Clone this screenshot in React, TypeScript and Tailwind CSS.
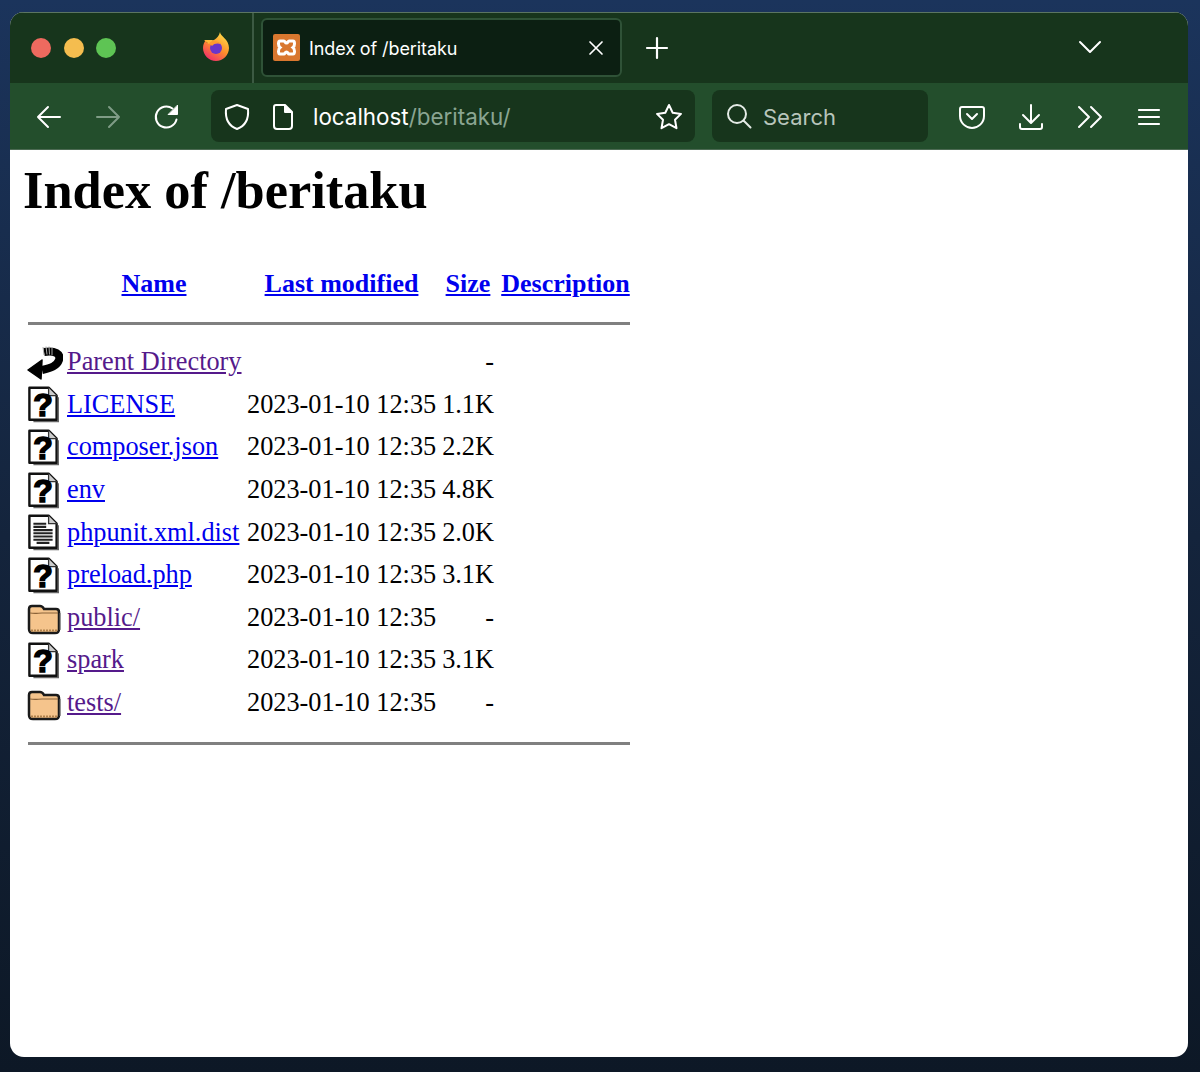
import React from "react";

const files = [
  { icon: "back", name: "Parent Directory", date: "", size: "-", visited: true },
  { icon: "unknown", name: "LICENSE", date: "2023-01-10 12:35", size: "1.1K" },
  { icon: "unknown", name: "composer.json", date: "2023-01-10 12:35", size: "2.2K" },
  { icon: "unknown", name: "env", date: "2023-01-10 12:35", size: "4.8K" },
  { icon: "text", name: "phpunit.xml.dist", date: "2023-01-10 12:35", size: "2.0K" },
  { icon: "unknown", name: "preload.php", date: "2023-01-10 12:35", size: "3.1K" },
  { icon: "folder", name: "public/", date: "2023-01-10 12:35", size: "-", visited: true },
  { icon: "unknown", name: "spark", date: "2023-01-10 12:35", size: "3.1K", visited: true },
  { icon: "folder", name: "tests/", date: "2023-01-10 12:35", size: "-", visited: true },
];

const Page = () => (
  <>
    <path d="M20 7v15H4" fill="none" stroke="#666" strokeWidth="1.200" />
    <path d="M1.500 1h12l5 5v15h-17z" fill="#fff" stroke="#111" strokeWidth="1.500" strokeLinejoin="round" />
    <path d="M13.500 1v5h5" fill="#ccc" stroke="#333" strokeWidth="0.800" />
  </>
);

const FileIcon = ({ type }: { type: string }) => {
  if (type === "back") {
    return (
      <svg width="36" height="36" viewBox="0 0 36 36" className="ml-[-1px] mt-[1px]">
        <path d="M17 7C28 5 34 9 32 15 30 21 24 23 15 25" fill="none" stroke="#000" strokeWidth="8" />
        <path d="M1 25L15 15 14 34z" fill="#000" stroke="#000" strokeWidth="1.500" strokeLinejoin="round" />
        <path d="M16 2l1 8M19 1.500l1 8M22 1.500l.5 8M25 2l0 8" stroke="#aaa" strokeWidth="1" />
      </svg>
    );
  }
  if (type === "folder") {
    return (
      <svg width="34" height="32" viewBox="0 0 34 32" className="mt-[4px] ml-[-1px]">
        <path d="M2 6c0-2 1-3 3-3h8c2 0 3 1 4 3h12c2 0 3 1 3 3v17c0 3-1 4-4 4H6c-3 0-4-1-4-4z" fill="#f5c48c" stroke="#1a1a1a" strokeWidth="2.500" />
        <path d="M3 10c6 1 8 0 12 0h16" fill="none" stroke="#8a6238" strokeWidth="1.200" />
        <path d="M4 27.500h26" stroke="#b0814c" strokeWidth="2" strokeDasharray="2 1" />
        <path d="M33 10v17" stroke="#666" strokeWidth="1" />
      </svg>
    );
  }
  if (type === "text") {
    return (
      <svg width="32" height="37" viewBox="0 0 20 23" className="ml-[-1px]">
        <Page />
        <path d="M4 6h8M4 8h8M4 10h12M4 12h12M4 14h12M4 16h12M6 18h8" stroke="#222" strokeWidth="1.300" />
      </svg>
    );
  }
  return (
    <svg width="32" height="37" viewBox="0 0 20 23" className="ml-[-1px]">
      <Page />
      <text x="10" y="18.600" textAnchor="middle" fontFamily="Liberation Sans" fontWeight="700" fontSize="20" stroke="#000" strokeWidth="1">
        ?
      </text>
    </svg>
  );
};

const Firefox = () => (
  <svg width="28" height="30" viewBox="0 0 28 30">
    <defs>
      <linearGradient id="fx" x1="0.8" y1="0" x2="0.2" y2="1">
        <stop offset="0" stopColor="#ffe14a" />
        <stop offset="0.5" stopColor="#ff8f2b" />
        <stop offset="1" stopColor="#f0266f" />
      </linearGradient>
    </defs>
    <path d="M18 0c0 4 9 7 9 16 0 7-6 13-13 13S1 23 1 16c0-3 1-6 3-8l1 3c2-2 5-3 7-3 3-2 5-4 6-8z" fill="url(#fx)" />
    <path d="M2 8h9l-4 4z" fill="#ffb73a" />
    <circle cx="14" cy="16" r="6" fill="#6b35c9" />
    <path d="M7 11c3-2 9-3 12 1-3-1-7-1-9 2z" fill="#ff9a2e" />
  </svg>
);

const Xampp = () => (
  <svg width="27" height="27" viewBox="0 0 27 27">
    <rect width="27" height="27" rx="2" fill="#d9772f" />
    <path d="M7 7h4c1 0 1 2 2.500 2S15 7 16 7h4c2 0 2 5 0 6.500 2 1.500 2 6.500 0 6.500h-4c-1 0-1-2-2.500-2S12 20 11 20H7c-2 0-2-5 0-6.500C5 12 5 7 7 7z" fill="none" stroke="#fff" strokeWidth="3" />
  </svg>
);

const Icon = ({ children, size = 30 }: { children: React.ReactNode; size?: number }) => (
  <svg width={size} height={size} viewBox="0 0 30 30" fill="none" stroke="currentColor" strokeWidth="2" strokeLinecap="round" strokeLinejoin="round">
    {children}
  </svg>
);

const NavSlot = ({ children, dim }: { children: React.ReactNode; dim?: boolean }) => (
  <div className={`w-[59px] pt-[2px] flex justify-center items-center ${dim ? "text-[#7f9c86]" : "text-white"}`}>{children}</div>
);

export default function App() {
  return (
    <div className="h-[1072px] w-[1200px] overflow-hidden pt-[12px] pl-[10px] bg-gradient-to-b from-[#1b345c] via-[#14243c] to-[#0d1826]">
      <div className="w-[1178px] h-[1045px] rounded-[14px] overflow-hidden bg-white flex flex-col font-['Inter',sans-serif]">
        <div className="h-[71px] flex items-center bg-[#17351c] border-t border-[#5b7562] shrink-0">
          <div className="w-[244px] h-full border-r-2 border-[#3c5a43] flex items-center pl-[21px] shrink-0">
            <div className="w-[20px] h-[20px] rounded-full bg-[#ee6a5f]" />
            <div className="w-[20px] h-[20px] rounded-full bg-[#f5bd4f] ml-[12.500px]" />
            <div className="w-[20px] h-[20px] rounded-full bg-[#5ec454] ml-[12.500px]" />
            <div className="ml-[86px] mt-[-2px]">
              <Firefox />
            </div>
          </div>
          <div className="ml-[7px] w-[361px] h-[59px] mt-[-1px] rounded-[6px] bg-[#0c1f12] border-2 border-[#2f5237] flex items-center pl-[10px] pr-[16px] text-white">
            <Xampp />
            <span className="ml-[9px] mt-[3px] text-[18px] leading-none tracking-[-0.1px]">Index of /beritaku</span>
            <svg className="ml-auto" width="16" height="16" viewBox="0 0 16 16" stroke="currentColor" strokeWidth="1.700" strokeLinecap="round">
              <path d="M2 2l12 12M14 2L2 14" />
            </svg>
          </div>
          <div className="ml-[23px] text-white">
            <svg width="24" height="24" viewBox="0 0 24 24" stroke="currentColor" strokeWidth="2.200" strokeLinecap="round">
              <path d="M12 2v20M2 12h20" />
            </svg>
          </div>
          <div className="ml-[409px] mt-[-2px] text-white">
            <svg width="24" height="14" viewBox="0 0 24 14" fill="none" stroke="currentColor" strokeWidth="2" strokeLinecap="round" strokeLinejoin="round">
              <path d="M2 2l10 10L22 2" />
            </svg>
          </div>
        </div>

        <div className="h-[67px] flex items-center bg-[#234e2c] pl-[9.500px] border-b border-[#4c6a53] shrink-0">
          <NavSlot>
            <Icon>
              <path d="M26 15H4M14 5L4 15l10 10" />
            </Icon>
          </NavSlot>
          <NavSlot dim>
            <Icon>
              <path d="M4 15h22M16 5l10 10-10 10" />
            </Icon>
          </NavSlot>
          <NavSlot>
            <Icon>
              <path d="M24.500 17.500A10.500 10.500 0 1 1 20.500 6.500" />
              <path d="M25.500 3.500v9h-9z" fill="currentColor" strokeWidth="1" />
            </Icon>
          </NavSlot>
          <div className="ml-[14.500px] w-[484px] h-[52px] rounded-[8px] bg-[#17351c] flex items-center text-white shrink-0">
            <div className="ml-[12px] mt-[1px]">
              <svg width="28" height="30" viewBox="0 0 28 30" fill="none" stroke="currentColor" strokeWidth="2" strokeLinejoin="round">
                <path d="M14 3l11 4c1 11-3 17-11 20C6 24 2 18 3 7z" />
              </svg>
            </div>
            <div className="ml-[22px] mt-[1px]">
              <svg width="20" height="26" viewBox="0 0 20 26" fill="none" stroke="currentColor" strokeWidth="2" strokeLinejoin="round">
                <path d="M3 1h9l7 7v14a3 3 0 0 1-3 3H4a3 3 0 0 1-3-3V3a2 2 0 0 1 2-2z" />
                <path d="M12 1v7h7" fill="currentColor" />
              </svg>
            </div>
            <span className="ml-[20px] mt-[2px] text-[22.400px] leading-none">
              localhost<span className="text-[#8aa592]">/beritaku/</span>
            </span>
            <div className="ml-auto mr-[11px] mt-[1px]">
              <Icon>
                <path d="M15 3l3.700 7.800 8.300 1.100-6 5.900 1.500 8.400L15 22.200l-7.500 4 1.500-8.400-6-5.900 8.300-1.100z" />
              </Icon>
            </div>
          </div>
          <div className="ml-[17px] w-[216px] h-[52px] rounded-[8px] bg-[#17351c] flex items-center shrink-0">
            <div className="ml-[13px] text-[#e4ebe6] mt-[1px]">
              <svg width="28" height="28" viewBox="0 0 28 28" fill="none" stroke="currentColor" strokeWidth="2" strokeLinecap="round">
                <circle cx="12" cy="11" r="9" />
                <path d="M18.500 17.500l7 7" />
              </svg>
            </div>
            <span className="ml-[10px] mt-[1px] text-[22px] leading-none text-[#b7c5bb]">Search</span>
          </div>
          <div className="ml-[14.500px] flex">
            <NavSlot>
              <svg width="26" height="24" viewBox="0 0 26 24" fill="none" stroke="currentColor" strokeWidth="2" strokeLinecap="round" strokeLinejoin="round">
                <path d="M3 2h20a2 2 0 0 1 2 2v7c0 7-6 12-12 12S1 18 1 11V4a2 2 0 0 1 2-2z" />
                <path d="M8 9l5 5 5-5" />
              </svg>
            </NavSlot>
            <NavSlot>
              <svg width="26" height="28" viewBox="0 0 26 28" fill="none" stroke="currentColor" strokeWidth="2" strokeLinecap="round" strokeLinejoin="round">
                <path d="M13 2v17M5 12l8 8 8-8M2 21v3a2 2 0 0 0 2 2h18a2 2 0 0 0 2-2v-3" />
              </svg>
            </NavSlot>
            <NavSlot>
              <svg width="26" height="24" viewBox="0 0 26 24" fill="none" stroke="currentColor" strokeWidth="2" strokeLinecap="round" strokeLinejoin="round">
                <path d="M2 2l10 10L2 22M14 2l10 10-10 10" />
              </svg>
            </NavSlot>
            <NavSlot>
              <svg width="24" height="20" viewBox="0 0 24 20" stroke="currentColor" strokeWidth="2.200" strokeLinecap="round">
                <path d="M2 3h20M2 10h20M2 17h20" />
              </svg>
            </NavSlot>
          </div>
        </div>

        <div className="flex-1 font-['Liberation_Serif',serif] text-black text-[26.300px] pl-[13px]">
          <h1 className="text-[52.400px] font-bold leading-[60px] mt-[10px]">Index of /beritaku</h1>
          <div className="ml-[5px] w-[602px] mt-[42px]">
            <div className="flex h-[42px] items-center font-bold leading-none text-[26px] pt-[1px]">
              <div className="w-[39px]" />
              <a className="w-[174px] text-center text-[#0000ee] underline">Name</a>
              <a className="ml-[6px] w-[189px] text-center text-[#0000ee] underline">Last modified</a>
              <a className="ml-[6px] w-[52px] text-center text-[#0000ee] underline">Size</a>
              <a className="ml-[7px] w-[129px] text-center text-[#0000ee] underline whitespace-nowrap">Description</a>
            </div>
            <div className="h-[3px] bg-[#808080] mt-[18px] mb-[16px]" />
            {files.map((f) => (
              <div key={f.name} className="flex h-[42.600px] items-center leading-none whitespace-nowrap">
                <div className="w-[39px] h-[37px] shrink-0">
                  <FileIcon type={f.icon} />
                </div>
                <a className={`w-[174px] underline ${f.visited ? "text-[#551a8b]" : "text-[#0000ee]"}`}>{f.name}</a>
                <span className="ml-[6px] w-[189px]">{f.date}</span>
                <span className="ml-[6px] w-[52px] text-right">{f.size}</span>
              </div>
            ))}
            <div className="h-[3px] bg-[#808080] mt-[18px]" />
          </div>
        </div>
      </div>
    </div>
  );
}
